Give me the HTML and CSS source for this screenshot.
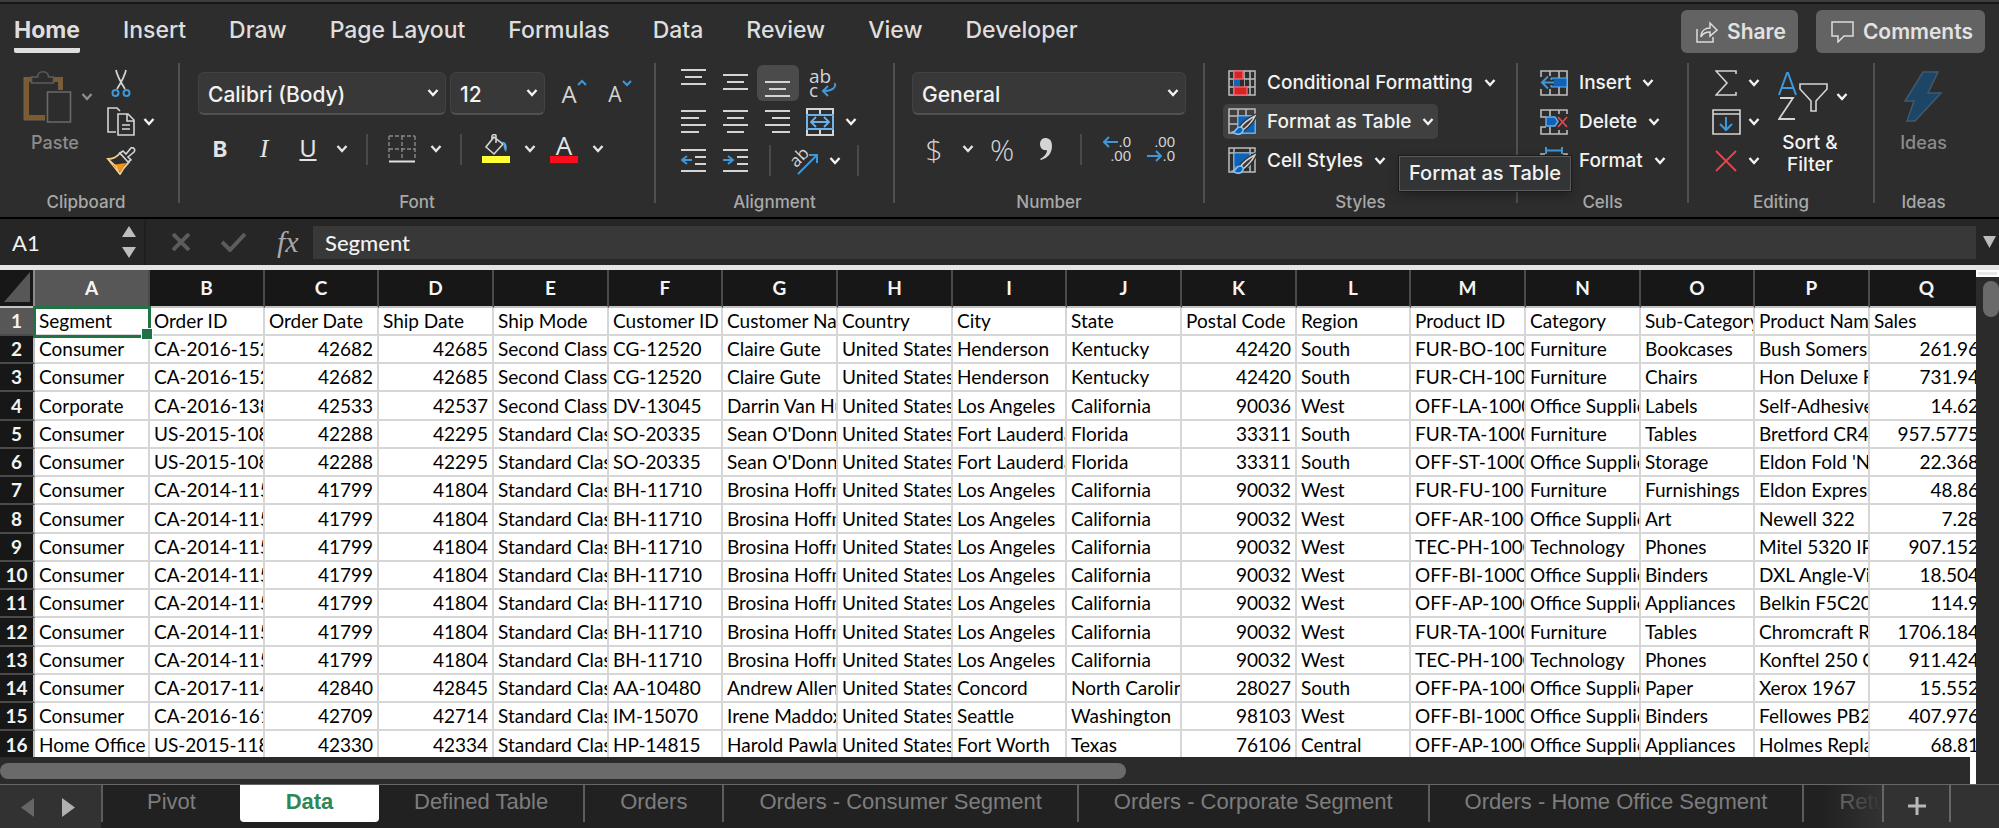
FILE: index.html
```html
<!DOCTYPE html>
<html lang="en">
<head>
    <meta charset="UTF-8">
    <meta name="viewport" content="width=device-width, initial-scale=1.0">
    <title>Orders workbook</title>
    <link rel="stylesheet" href="styles.css">
</head>
<body>

    <!-- Shared icon shapes -->
    <svg class="symbols" aria-hidden="true">
        <symbol id="caret" viewBox="0 0 12 10"><path d="M1.5 2L6 7l4.500-5" fill="none" stroke="currentColor" stroke-width="2.400"/></symbol>
        <symbol id="brush" viewBox="0 0 28 28">
            <path d="M27 8C21 11 15 16 12.500 19.500l2.500 2.500C20 18 25 12.500 27 8z" fill="#2d2d2d" stroke="#2d2d2d" stroke-width="4"/>
            <path d="M27 8C21 11 15 16 12.500 19.500l2.500 2.500C20 18 25 12.500 27 8z" fill="#3a3a3a" stroke="#d0d0d0" stroke-width="1.600"/>
            <path d="M5 24c3 0 3-5 7-5 3 0 4 3 2.500 5-2 3-6 3-9.500 0z" fill="#0f62b5" stroke="#8cc4f0" stroke-width="1.600"/>
        </symbol>
    </svg>

    <!-- Ribbon tabs -->
    <header class="topbar">
        <nav class="ribbon-tabs">
            <a class="active" href="#">Home</a>
            <a href="#">Insert</a>
            <a href="#">Draw</a>
            <a href="#">Page Layout</a>
            <a href="#">Formulas</a>
            <a href="#">Data</a>
            <a href="#">Review</a>
            <a href="#">View</a>
            <a href="#">Developer</a>
        </nav>
        <div class="top-actions">
            <button type="button">
                <svg width="22" height="22" viewBox="0 0 22 22" fill="none" stroke="#dcdcdc" stroke-width="1.500"><path d="M1 8v13h16v-5M5 16c0-6 4-9 9-9V2l7 7-7 6v-4c-4 0-7 1-9 5z"/></svg>
                Share
            </button>
            <button type="button">
                <svg width="23" height="22" viewBox="0 0 23 22" fill="none" stroke="#dcdcdc" stroke-width="1.500"><path d="M1 1h21v14H13l-6 6v-6H1z"/></svg>
                Comments
            </button>
        </div>
    </header>

    <!-- Ribbon -->
    <section class="ribbon">
        <div class="group clipboard">
            <div class="group-body columns">
                <button type="button" class="big dim">
                    <svg width="50" height="54" viewBox="0 0 50 54" fill="none">
                        <path d="M22 47.500H3.500V9.500h34V20" stroke="#7d5a32" stroke-width="5"/>
                        <path d="M1 50h21M1 50V7M38 7v13" stroke="#6f6654" stroke-width="1"/>
                        <path d="M8.500 13V7h6c0-7 11-7 11 0h5v6z" fill="#2d2d2d" stroke="#5c5c5c" stroke-width="1.600"/>
                        <path d="M24.500 22h23v30h-23z" fill="#2d2d2d" stroke="#6a6a6a" stroke-width="1.600"/>
                    </svg>
                    <svg class="caret"><use href="#caret"/></svg>
                    <span>Paste</span>
                </button>
                <div class="rows">
                    <div class="row">
                        <button type="button" class="icon" aria-label="Cut"><svg width="28" height="28" viewBox="0 0 28 28" fill="none"><path d="M9 1c1 5 4 11 9 19M19 1c-1 5-4 11-9 19" stroke="#d4d4d4" stroke-width="1.700"/><circle cx="8.500" cy="24" r="3" stroke="#3f97d8" stroke-width="2"/><circle cx="19.500" cy="24" r="3" stroke="#3f97d8" stroke-width="2"/></svg></button>
                    </div>
                    <div class="row">
                        <button type="button" class="icon" aria-label="Copy"><svg width="30" height="30" viewBox="0 0 30 30" fill="none" stroke="#d4d4d4" stroke-width="1.600"><path d="M10 25H2V1h9l3 3"/><path d="M12 7h10l6 6v15H12zM21 7v7h7M16 18h8M16 22h8"/></svg></button>
                        <button type="button" class="drop" aria-label="Copy options"><svg class="caret"><use href="#caret"/></svg></button>
                    </div>
                    <div class="row">
                        <button type="button" class="icon" aria-label="Format Painter"><svg width="30" height="28" viewBox="0 0 30 28" fill="none"><path d="M2 12c5 0 9-2 12-6l9 9c-4 4-7 8-9 12z" stroke="#f3cf8d" stroke-width="1.800"/><path d="M6 18l14-2-6 9z" fill="#f0921e"/><path d="M2 12l8 7 3 7" stroke="#f3cf8d" stroke-width="1.200"/><path d="M14 6l3-2 3 3 5-6c2-1 5 1 3 4l-6 5 3 3-3 2z" fill="#2d2d2d" stroke="#d4d4d4" stroke-width="1.600"/></svg></button>
                    </div>
                </div>
            </div>
            <h2>Clipboard</h2>
        </div>
        <div class="divider"></div>

        <div class="group font">
            <div class="group-body">
                <div class="fields">
                    <span class="select-box family">
                        <select aria-label="Font"><option>Calibri (Body)</option></select>
                        <svg class="caret"><use href="#caret"/></svg>
                    </span>
                    <span class="select-box size">
                        <select aria-label="Font size"><option>12</option></select>
                        <svg class="caret"><use href="#caret"/></svg>
                    </span>
                    <button type="button" class="grow" aria-label="Increase font size"><span>A</span><svg width="10" height="8" viewBox="0 0 10 8"><path d="M1 6l4-4 4 4" fill="none" stroke="#3f97d8" stroke-width="2"/></svg></button>
                    <button type="button" class="grow shrink" aria-label="Decrease font size"><span>A</span><svg width="10" height="8" viewBox="0 0 10 8"><path d="M1 2l4 4 4-4" fill="none" stroke="#3f97d8" stroke-width="2"/></svg></button>
                </div>
                <div class="tools">
                    <button type="button" class="tool"><b>B</b></button>
                    <button type="button" class="tool"><i>I</i></button>
                    <button type="button" class="tool"><u>U</u></button>
                    <button type="button" class="drop" aria-label="Underline options"><svg class="caret"><use href="#caret"/></svg></button>
                    <span class="rule"></span>
                    <button type="button" class="tool" aria-label="Borders"><svg width="28" height="28" viewBox="0 0 28 28" fill="none"><path d="M1 1h26M1 14h26M1 1v24M14 1v24M27 1v24" stroke="#888" stroke-width="1.400" stroke-dasharray="4 2"/><path d="M1 26.500h26" stroke="#e0e0e0" stroke-width="2"/></svg></button>
                    <button type="button" class="drop" aria-label="Border options"><svg class="caret"><use href="#caret"/></svg></button>
                    <span class="rule"></span>
                    <button type="button" class="tool" aria-label="Fill color"><svg width="30" height="30" viewBox="0 0 30 30" fill="none"><path d="M13 3L5 13l8 7 9-10zM11 6V2c1-2 4-2 4 0v7" stroke="#d4d4d4" stroke-width="1.600"/><path d="M20 8c5-1 7 4 5 10-2-3-3-5-2-8z" fill="#5aa7e0"/><path d="M1 22h28v7H1z" fill="#ffff33"/></svg></button>
                    <button type="button" class="drop" aria-label="Fill options"><svg class="caret"><use href="#caret"/></svg></button>
                    <button type="button" class="tool font-color" aria-label="Font color"><span>A</span></button>
                    <button type="button" class="drop" aria-label="Font color options"><svg class="caret"><use href="#caret"/></svg></button>
                </div>
            </div>
            <h2>Font</h2>
        </div>
        <div class="divider"></div>

        <div class="group alignment">
            <div class="group-body">
                <div class="row">
                    <button type="button" class="align" aria-label="Top align"><svg width="26" height="28" viewBox="0 0 26 28"><path d="M0 1h25M4 8h17M0 15h25"/></svg></button>
                    <button type="button" class="align" aria-label="Middle align"><svg width="26" height="28" viewBox="0 0 26 28"><path d="M0 6h25M4 13h17M0 20h25"/></svg></button>
                    <button type="button" class="align on" aria-label="Bottom align"><svg width="26" height="28" viewBox="0 0 26 28"><path d="M0 13h25M4 20h17M0 27h25"/></svg></button>
                    <button type="button" class="align wrap" aria-label="Wrap text"><span>ab<br>c</span><svg width="15" height="14" viewBox="0 0 15 14"><path d="M14 0c1 5-3 8-12 8M7 3L2 8l5 5" stroke="#3f97d8" stroke-width="2"/></svg></button>
                </div>
                <div class="row">
                    <button type="button" class="align" aria-label="Align left"><svg width="26" height="28" viewBox="0 0 26 28"><path d="M0 3h25M0 10h18M0 17h25M0 24h18"/></svg></button>
                    <button type="button" class="align" aria-label="Center"><svg width="26" height="28" viewBox="0 0 26 28"><path d="M0 3h25M4 10h17M0 17h25M4 24h17"/></svg></button>
                    <button type="button" class="align" aria-label="Align right"><svg width="26" height="28" viewBox="0 0 26 28"><path d="M0 3h25M7 10h18M0 17h25M7 24h18"/></svg></button>
                    <button type="button" class="align" aria-label="Merge and center"><svg width="28" height="28" viewBox="0 0 28 28"><path d="M1 1h26v26H1zM14 1v6M14 21v6"/><path d="M1 7h26v14H1zM5 14h18M10 9l-5 5 5 5M18 9l5 5-5 5" stroke="#6bb0e6" stroke-width="1.800"/></svg></button>
                    <button type="button" class="drop" aria-label="Merge options"><svg class="caret"><use href="#caret"/></svg></button>
                </div>
                <div class="row">
                    <button type="button" class="align" aria-label="Decrease indent"><svg width="26" height="28" viewBox="0 0 26 28"><path d="M0 3h25M14 10h11M14 17h11M0 24h25"/><path d="M11 13H1M6 9l-5 4 5 4" stroke="#3f97d8" stroke-width="2"/></svg></button>
                    <button type="button" class="align" aria-label="Increase indent"><svg width="26" height="28" viewBox="0 0 26 28"><path d="M0 3h25M14 10h11M14 17h11M0 24h25"/><path d="M0 13h10M5 9l5 4-5 4" stroke="#3f97d8" stroke-width="2"/></svg></button>
                    <span class="rule"></span>
                    <button type="button" class="align orient" aria-label="Orientation"><span>ab</span><svg width="22" height="22" viewBox="0 0 22 22"><path d="M1 21L20 2M12 2h8v8" stroke="#3f97d8" stroke-width="2"/></svg></button>
                    <button type="button" class="drop" aria-label="Orientation options"><svg class="caret"><use href="#caret"/></svg></button>
                    <span class="rule"></span>
                </div>
            </div>
            <h2>Alignment</h2>
        </div>
        <div class="divider"></div>

        <div class="group number">
            <div class="group-body">
                <div class="fields">
                    <span class="select-box format">
                        <select aria-label="Number format"><option>General</option></select>
                        <svg class="caret"><use href="#caret"/></svg>
                    </span>
                </div>
                <div class="tools">
                    <button type="button" class="tool sign">$</button>
                    <button type="button" class="drop" aria-label="Currency options"><svg class="caret"><use href="#caret"/></svg></button>
                    <button type="button" class="tool sign">%</button>
                    <button type="button" class="tool" aria-label="Comma style"><svg width="14" height="24" viewBox="0 0 14 24"><path d="M6 1c4 0 7 2 7 8 0 7-4 12-11 14l-1-1c4-2 7-5 7-9-4 1-7-2-7-6 0-3 2-6 5-6z" fill="#d4d4d4"/></svg></button>
                    <span class="rule"></span>
                    <button type="button" class="tool decimals" aria-label="Increase decimal"><span>.0<br>.00</span><svg class="arrow-up" width="15" height="12" viewBox="0 0 15 12"><path d="M15 6H1M6 1L1 6l5 5" fill="none" stroke="#3f97d8" stroke-width="2"/></svg></button>
                    <button type="button" class="tool decimals" aria-label="Decrease decimal"><span>.00<br>.0</span><svg class="arrow-down" width="15" height="12" viewBox="0 0 15 12"><path d="M0 6h14M9 1l5 5-5 5" fill="none" stroke="#3f97d8" stroke-width="2"/></svg></button>
                </div>
            </div>
            <h2>Number</h2>
        </div>
        <div class="divider"></div>

        <div class="group styles">
            <div class="group-body">
                <button type="button" class="command">
                    <svg width="28" height="26" viewBox="0 0 28 26" fill="none"><path d="M1 1h26v24H1zM1 9h26M1 17h26M6 1v24M16 1v24M22 1v24" stroke="#bdbdbd" stroke-width="1.500"/><path d="M6 9h10v8H6z" fill="#2d2d2d"/><path d="M6 9h6v8H6z" fill="#1266b8"/><path d="M6 1h9v8H6zM6 17h13v8H6z" fill="#d62424" stroke="#f0606a" stroke-width="1.400"/></svg>
                    Conditional Formatting
                    <svg class="caret"><use href="#caret"/></svg>
                </button>
                <div class="command-slot">
                    <button type="button" class="command on">
                        <svg width="28" height="27" viewBox="0 0 28 27" fill="none"><path d="M1 1h26v24H1zM1 8h26M1 16h10M10 1v24M18 1v8" stroke="#bdbdbd" stroke-width="1.500"/><path d="M10 8h17v17H10z" fill="#0f62b5" stroke="#6bb0e6"/><use href="#brush" width="28" height="28"/></svg>
                        Format as Table
                        <svg class="caret"><use href="#caret"/></svg>
                    </button>
                    <div class="tooltip" role="tooltip">Format as Table</div>
                </div>
                <button type="button" class="command">
                    <svg width="28" height="27" viewBox="0 0 28 27" fill="none"><path d="M1 1h26v24H1zM1 6h26M6 1v24M22 1v24" stroke="#bdbdbd" stroke-width="1.500"/><path d="M6 6h16v14H6z" fill="#0f62b5" stroke="#6bb0e6"/><use href="#brush" width="28" height="28"/></svg>
                    Cell Styles
                    <svg class="caret"><use href="#caret"/></svg>
                </button>
            </div>
            <h2>Styles</h2>
        </div>
        <div class="divider"></div>

        <div class="group cells">
            <div class="group-body">
                <button type="button" class="command">
                    <svg width="28" height="26" viewBox="0 0 28 26" fill="none"><path d="M1 7V1h26v24H1v-6M10 1v5M19 1v24M10 19v6" stroke="#bdbdbd" stroke-width="1.600"/><path d="M11 8h16v9H11z" fill="#0f62b5" stroke="#6bb0e6"/><path d="M14 12.500H2M8 6l-6 6.500L8 19" stroke="#2d2d2d" stroke-width="5"/><path d="M14 12.500H2M8 6.500L2 12.500l6 6" stroke="#3f97d8" stroke-width="2"/></svg>
                    Insert
                    <svg class="caret"><use href="#caret"/></svg>
                </button>
                <button type="button" class="command">
                    <svg width="28" height="26" viewBox="0 0 28 26" fill="none"><path d="M27 5V1H1v7h5M27 21v4H1v-7h5M10 1v6M19 1v4M10 18v7M19 21v4" stroke="#bdbdbd" stroke-width="1.600"/><path d="M6 8h9l3 4.500-3 4.500H6z" fill="#0f62b5" stroke="#6bb0e6" stroke-width="1.400"/><path d="M18 8l9 10M27 8l-9 10" stroke="#e2474d" stroke-width="1.800"/></svg>
                    Delete
                    <svg class="caret"><use href="#caret"/></svg>
                </button>
                <button type="button" class="command">
                    <svg width="28" height="28" viewBox="0 0 28 28" fill="none"><path d="M5 7H1v19h26V7h-4M9 9v17M19 9v17" stroke="#bdbdbd" stroke-width="1.600"/><path d="M6 3.500h16M6 0v7M22 0v7" stroke="#3f97d8" stroke-width="2"/></svg>
                    Format
                    <svg class="caret"><use href="#caret"/></svg>
                </button>
            </div>
            <h2>Cells</h2>
        </div>
        <div class="divider"></div>

        <div class="group editing">
            <div class="group-body columns">
                <div class="rows">
                    <div class="row">
                        <button type="button" class="icon" aria-label="AutoSum"><svg width="22" height="26" viewBox="0 0 22 26" fill="none"><path d="M21 4V1H1l11 12L1 25h20v-3" stroke="#d4d4d4" stroke-width="1.600"/></svg></button>
                        <button type="button" class="drop" aria-label="AutoSum options"><svg class="caret"><use href="#caret"/></svg></button>
                    </div>
                    <div class="row">
                        <button type="button" class="icon" aria-label="Fill"><svg width="29" height="26" viewBox="0 0 29 26" fill="none"><path d="M1 1h27v24H1zM1 5h27" stroke="#d4d4d4" stroke-width="1.600"/><path d="M14 8v13M8 15l6 6 6-6" stroke="#3f97d8" stroke-width="2"/></svg></button>
                        <button type="button" class="drop" aria-label="Fill options"><svg class="caret"><use href="#caret"/></svg></button>
                    </div>
                    <div class="row">
                        <button type="button" class="icon" aria-label="Clear"><svg width="22" height="22" viewBox="0 0 22 22"><path d="M1 1l20 20M21 1L1 21" stroke="#e2474d" stroke-width="1.800"/></svg></button>
                        <button type="button" class="drop" aria-label="Clear options"><svg class="caret"><use href="#caret"/></svg></button>
                    </div>
                </div>
                <button type="button" class="big">
                    <svg width="50" height="54" viewBox="0 0 50 54" fill="none"><path d="M1 25L9 3h1l8 22M4 18h11" stroke="#3f97d8" stroke-width="2"/><path d="M2 28h13L1 49h16" stroke="#d4d4d4" stroke-width="1.800"/><path d="M22 14h27v5L38 31v10h-5V31L22 19z" stroke="#d4d4d4" stroke-width="1.600"/></svg>
                    <svg class="caret"><use href="#caret"/></svg>
                    <span>Sort &amp;<br>Filter</span>
                </button>
            </div>
            <h2>Editing</h2>
        </div>
        <div class="divider"></div>

        <div class="group ideas">
            <div class="group-body columns">
                <button type="button" class="big dim">
                    <svg width="40" height="54" viewBox="0 0 40 54"><path d="M20 2h15L25 23h13L12 51H4l7-20H2z" fill="#1d4565" stroke="#3f5a6e" stroke-width="1.500"/></svg>
                    <span>Ideas</span>
                </button>
            </div>
            <h2>Ideas</h2>
        </div>
    </section>

    <!-- Formula bar -->
    <section class="formula-bar">
        <input class="name-box" type="text" value="A1" aria-label="Name box">
        <div class="stepper">
            <button type="button" aria-label="Previous name"><svg width="14" height="11" viewBox="0 0 14 11"><path d="M7 0l7 11H0z"/></svg></button>
            <button type="button" aria-label="Next name"><svg width="14" height="11" viewBox="0 0 14 11"><path d="M7 11l7-11H0z"/></svg></button>
        </div>
        <div class="formula-actions">
            <button type="button" aria-label="Cancel"><svg width="18" height="18" viewBox="0 0 18 18"><path d="M1 1l16 16M17 1L1 17" stroke="#5c5c5c" stroke-width="4"/></svg></button>
            <button type="button" aria-label="Enter"><svg width="25" height="19" viewBox="0 0 25 19"><path d="M1 9l8 8L24 1" fill="none" stroke="#5c5c5c" stroke-width="4"/></svg></button>
            <button type="button" class="fx" aria-label="Insert function">fx</button>
        </div>
        <input class="formula" type="text" value="Segment" aria-label="Formula">
        <button type="button" class="expand" aria-label="Expand formula bar"><svg width="13" height="12" viewBox="0 0 13 12"><path d="M6.500 12L13 0H0z"/></svg></button>
    </section>

    <!-- Worksheet -->
    <main class="sheet">
        <div class="viewport">
            <table id="grid">
                <thead><tr></tr></thead>
                <tbody></tbody>
            </table>
            <div class="selection"></div>
        </div>
        <div class="scroll-y"><div class="split"></div><div class="thumb"></div></div>
    </main>
    <div class="scroll-x"><div class="thumb"></div><div class="split"></div></div>

    <!-- Sheet tabs -->
    <footer class="sheet-bar">
        <div class="sheet-nav">
            <button type="button" class="prev" aria-label="Previous sheet"><svg width="13" height="19" viewBox="0 0 13 19"><path d="M13 0v19L0 9.500z"/></svg></button>
            <button type="button" aria-label="Next sheet"><svg width="13" height="19" viewBox="0 0 13 19"><path d="M0 0v19l13-9.500z"/></svg></button>
        </div>
        <div class="sheet-tabs">
            <button type="button">Pivot</button>
            <button type="button" class="active">Data</button>
            <button type="button">Defined Table</button>
            <button type="button">Orders</button>
            <button type="button">Orders - Consumer Segment</button>
            <button type="button">Orders - Corporate Segment</button>
            <button type="button">Orders - Home Office Segment</button>
            <button type="button">Returns</button>
        </div>
        <button type="button" class="add-sheet" aria-label="Add sheet"><svg width="18" height="18" viewBox="0 0 18 18"><path d="M9 0v18M0 9h18" stroke="#b8b8b8" stroke-width="3"/></svg></button>
        <div class="sheet-end"></div>
    </footer>

    <script src="script.js"></script>
</body>
</html>
```
FILE: styles.css
```css
/* Basic Reset */
* {
    margin: 0;
    padding: 0;
    box-sizing: border-box;
}

body {
    font-family: 'Inter', 'Roboto', sans-serif;
    font-size: 18px;
    color: #f2f2f2;
    background: #2d2d2d;
    height: 100vh;
    display: flex;
    flex-direction: column;
    overflow: hidden;
}

button, input, select {
    font: inherit;
    color: inherit;
    background: none;
    border: none;
    outline: none;
}

button {
    display: flex;
    align-items: center;
    justify-content: center;
    flex: none;
    white-space: nowrap;
}

svg {
    display: block;
    flex: none;
}

.symbols {
    position: absolute;
    width: 0;
    height: 0;
}

.caret {
    width: 12px;
    height: 10px;
}

/* Ribbon tabs */
.topbar {
    display: flex;
    justify-content: space-between;
    align-items: flex-start;
    height: 63px;
    flex: none;
    padding: 8px 14px 0;
    border-top: 2px solid #3c3c3c;
    box-shadow: inset 0 2px #171717;
}

.ribbon-tabs {
    display: flex;
    gap: 43px;
    font-size: 23px;
    font-weight: 500;
    line-height: 41px;
}

.ribbon-tabs a {
    color: #dedede;
    text-decoration: none;
    height: 43px;
}

.ribbon-tabs .active {
    font-weight: 700;
    border-bottom: 5px solid #dedede;
    border-radius: 2px;
}

.top-actions {
    display: flex;
    gap: 18px;
}

.top-actions button {
    height: 43px;
    padding: 0 12px 0 15px;
    gap: 9px;
    font-size: 21px;
    font-weight: 600;
    color: #e2e2e2;
    background: #636363;
    border-radius: 6px;
}

/* Ribbon */
.ribbon {
    display: flex;
    align-items: flex-start;
    flex: none;
    height: 156px;
    border-bottom: 2px solid #000;
}

.divider {
    width: 2px;
    height: 140px;
    background: #505050;
    flex: none;
}

.group {
    flex: none;
}

.group h2 {
    font-size: 17px;
    font-weight: 500;
    line-height: 22px;
    color: #a8a8a8;
    text-align: center;
}

.group-body {
    height: 128px;
}

.clipboard { width: 178px; }
.font { width: 474px; }
.alignment { width: 237px; }
.number { width: 308px; }
.styles { width: 311px; }
.cells { width: 169px; }
.editing { width: 184px; }
.ideas { width: 97px; }

.clipboard h2 { padding-right: 6px; }
.clipboard .group-body { padding-left: 23px; }
.font .group-body { padding: 9px 0 0 18px; }
.alignment .group-body { padding-left: 17px; }
.number .group-body { padding: 9px 0 0 17px; }
.styles .group-body { padding-left: 18px; }
.cells .group-body { padding-left: 17px; }
.editing .group-body { padding-left: 19px; }
.ideas .group-body { justify-content: center; }

.columns {
    display: flex;
    align-items: flex-start;
    gap: 10px;
}

.row {
    display: flex;
    align-items: center;
    height: 39px;
}

.icon {
    width: 36px;
    height: 35px;
}

.drop {
    width: 20px;
    height: 28px;
}

.fields {
    display: flex;
    align-items: center;
    height: 43px;
    gap: 4px;
}

.tools {
    display: flex;
    align-items: center;
    height: 30px;
    margin-top: 19px;
    color: #d4d4d4;
}

.tool {
    width: 44px;
    height: 30px;
    font-size: 23px;
}

.font .tool,
.font .drop,
.number .drop {
    color: #e4e4e4;
}

.tools .drop {
    width: 24px;
}

.rule {
    width: 2px;
    height: 31px;
    margin: 0 12px;
    background: #4a4a4a;
    flex: none;
}

/* Drop-down boxes */
.select-box {
    display: grid;
    align-items: center;
    height: 43px;
    background: #383838;
    border: 1px solid #424242;
    border-bottom: 2px solid #505050;
    border-radius: 6px;
}

.select-box > * {
    grid-area: 1 / 1;
}

.select-box select {
    appearance: none;
    width: 100%;
    height: 40px;
    padding: 3px 0 0 9px;
    font-size: 21px;
    font-weight: 500;
}

.select-box .caret {
    justify-self: end;
    margin-right: 6px;
    pointer-events: none;
}

.family { width: 248px; }
.size { width: 95px; }
.format { width: 274px; }

.grow {
    align-items: flex-start;
    width: 42px;
    height: 30px;
    font-family: 'Open Sans', sans-serif;
    font-size: 24px;
    line-height: 30px;
    color: #d4d4d4;
}

.size + .grow {
    margin-left: 4px;
}

.shrink {
    font-size: 21px;
}

.tool b {
    font-size: 22px;
}

.tool i {
    font-family: 'Liberation Serif', serif;
    font-size: 26px;
}

.font-color {
    align-items: flex-start;
}

.font-color span {
    width: 28px;
    height: 29px;
    line-height: 22px;
    font-family: 'Open Sans', sans-serif;
    font-size: 26px;
    border-bottom: 7px solid #fb0d1b;
}

/* Alignment */
.align {
    position: relative;
    width: 42px;
    height: 36px;
    color: #d4d4d4;
}

.align svg {
    fill: none;
    stroke: #d4d4d4;
    stroke-width: 2;
}

.align.on {
    background: #4b4b4b;
    border-radius: 6px;
}

.wrap {
    font-family: 'Open Sans', sans-serif;
    font-size: 19px;
    line-height: 14px;
    text-align: left;
}

.wrap svg {
    position: absolute;
    right: 5px;
    bottom: 4px;
}

.orient span {
    font-family: 'Open Sans', sans-serif;
    font-size: 17px;
    line-height: 18px;
    rotate: -45deg;
    margin: 0 10px 8px 0;
}

.orient svg {
    position: absolute;
    right: 6px;
    bottom: 4px;
}

/* Number */
.sign {
    font-family: 'Open Sans', sans-serif;
    font-weight: 300;
    font-size: 30px;
}

.decimals {
    position: relative;
    justify-content: flex-end;
    padding-right: 7px;
    font-family: 'Liberation Sans', sans-serif;
    font-size: 15px;
    line-height: 14px;
    text-align: right;
}

.decimals svg {
    position: absolute;
    left: 9px;
}

.arrow-up { top: 2px; }
.arrow-down { bottom: 2px; }

/* Styles and cells */
.styles .group-body,
.cells .group-body {
    display: flex;
    flex-direction: column;
    align-items: flex-start;
    gap: 4px;
    padding-top: 2px;
}

.command {
    height: 35px;
    padding: 0 4px 0 5px;
    gap: 11px;
    font-size: 19px;
    font-weight: 500;
    border-radius: 5px;
}

.command.on {
    background: #404040;
}

.command-slot {
    position: relative;
}

.tooltip {
    position: absolute;
    left: 176px;
    top: 52px;
    z-index: 1;
    padding: 0 9px;
    font-size: 20px;
    font-weight: 500;
    line-height: 33px;
    white-space: nowrap;
    background: #323436;
    border: 1px solid #5a5a5a;
    box-shadow: 0 0 0 1px #1b1b1b, 0 4px 10px rgba(0, 0, 0, 0.3);
}

/* Large buttons */
.big {
    display: grid;
    grid-template-columns: auto auto;
    gap: 8px;
    margin-top: 7px;
    font-weight: 500;
    line-height: 22px;
}

.big span {
    grid-column: 1 / -1;
    padding-right: 6px;
}

.big.dim {
    color: #8c8c8c;
}

.editing .big {
    margin-left: 4px;
    font-size: 19px;
}

.ideas .big {
    grid-template-columns: auto;
}

.ideas .big svg {
    justify-self: center;
}

.ideas .big span {
    padding-right: 0;
}

/* Formula bar */
.formula-bar {
    display: flex;
    align-items: center;
    flex: none;
    height: 51px;
    background: #262626;
    border-bottom: 5px solid #e4e4e4;
}

.name-box {
    width: 120px;
    height: 45px;
    padding-left: 12px;
    font-family: 'Lato', sans-serif;
    font-size: 22px;
}

.stepper {
    display: flex;
    flex-direction: column;
    gap: 10px;
    width: 24px;
    padding-left: 2px;
}

.stepper button {
    width: 14px;
}

.stepper svg,
.expand svg {
    fill: #bdbdbd;
}

.formula-actions {
    display: flex;
    align-items: center;
    width: 169px;
    height: 45px;
    padding-left: 26px;
    gap: 31px;
    border-left: 2px solid #1f1f1f;
}

.fx {
    font-family: 'Liberation Serif', serif;
    font-style: italic;
    font-size: 30px;
    color: #a8a8a8;
    line-height: 30px;
}

.formula {
    flex: 1;
    height: 33px;
    padding-left: 12px;
    font-family: 'Lato', sans-serif;
    font-size: 22px;
    font-weight: 500;
    background: #383838;
}

.expand {
    width: 23px;
    padding-left: 4px;
}

/* Worksheet */
.sheet {
    display: flex;
    flex: 1;
    min-height: 0;
}

.viewport {
    position: relative;
    flex: 1;
    min-width: 0;
    overflow: hidden;
    background: #fff;
}

table {
    table-layout: fixed;
    width: 0;
    border-spacing: 0;
    font-family: 'Lato', sans-serif;
    font-size: 19px;
    line-height: 26px;
    color: #000;
}

th, td {
    overflow: hidden;
    white-space: nowrap;
}

thead th {
    width: 115px;
    height: 38px;
    color: #f4f4f4;
    background: #171717;
    border-right: 2px solid #4a4a4a;
    border-bottom: 2px solid #c4c4c4;
}

/* Column pitch averages a little under 115px */
thead th:nth-child(3n + 4) {
    width: 114px;
}

thead .corner {
    width: 35px;
    padding: 0 4px 2px;
    border-right-color: #8a8a8a;
}

thead .current,
tbody .current {
    background: #575757;
}

tbody th {
    color: #f4f4f4;
    background: #171717;
    border-right: 2px solid #bdbdbd;
    border-bottom: 2px solid #4a4a4a;
    text-align: center;
}

td {
    height: 28px;
    padding: 0 4px;
    border-right: 2px solid #d6d6d6;
    border-bottom: 2px solid #d6d6d6;
}

tbody tr:nth-child(4n) td {
    height: 29px;
}

.num {
    text-align: right;
}

.selection {
    position: absolute;
    left: 33px;
    top: 36px;
    width: 118px;
    height: 32px;
    border: 3px solid #217346;
}

.selection::after {
    content: "";
    position: absolute;
    right: -5px;
    bottom: -5px;
    width: 10px;
    height: 10px;
    background: #217346;
    border: 1px solid #fff;
}

/* Scroll bars */
.scroll-y {
    width: 23px;
    background: #2b2b2b;
}

.scroll-y .split {
    height: 7px;
    background: #e8e8e8;
    border: 2px solid #fff;
}

.scroll-y .thumb {
    width: 16px;
    height: 36px;
    margin: 4px 0 0 7px;
    background: #6a6a6a;
    border-radius: 8px;
}

.scroll-x {
    display: flex;
    align-items: center;
    justify-content: space-between;
    flex: none;
    height: 27px;
    padding-right: 23px;
    background: #2b2b2b;
}

.scroll-x .thumb {
    width: 57%;
    height: 16px;
    background: #6a6a6a;
    border-radius: 8px;
}

.scroll-x .split {
    width: 6px;
    height: 27px;
    background: #fff;
}

/* Sheet tabs */
.sheet-bar {
    display: flex;
    flex: none;
    height: 44px;
    background: #323232;
    border-top: 1px solid #666;
}

.sheet-nav {
    display: flex;
    gap: 28px;
    width: 101px;
    padding: 2px 0 0 21px;
    flex: none;
}

.sheet-nav svg {
    fill: #b0b0b0;
}

.sheet-nav .prev svg {
    fill: #666;
}

.sheet-tabs {
    position: relative;
    display: flex;
    align-items: flex-start;
    flex: 1;
    min-width: 0;
    overflow: hidden;
    background: #212121;
}

.sheet-tabs button {
    height: 37px;
    min-width: 139px;
    padding: 0 35px 4px;
    font-family: 'Liberation Sans', sans-serif;
    font-size: 22px;
    color: #7d7d7d;
    border-left: 2px solid #5c5c5c;
}

.sheet-tabs .active {
    color: #2f8757;
    font-weight: 700;
    background: #fff;
    border-left: none;
    border-radius: 0 0 4px 4px;
}

.sheet-tabs .active + button {
    border-left: none;
}

/* Fade over the last visible tab */
.sheet-tabs::after {
    content: "";
    position: absolute;
    right: 0;
    top: 0;
    width: 60px;
    height: 100%;
    background: linear-gradient(to right, transparent, #323232);
}

.add-sheet {
    width: 69px;
    height: 37px;
    padding-top: 4px;
    border-left: 2px solid #666;
    border-right: 2px solid #666;
}

.sheet-end {
    width: 48px;
    flex: none;
}
```
FILE: script.js
```javascript
const columns = 'ABCDEFGHIJKLMNOPQ'.split('');
const numeric = [2, 3, 10, 16];

const rows = [
    ['Segment', 'Order ID', 'Order Date', 'Ship Date', 'Ship Mode', 'Customer ID', 'Customer Name', 'Country', 'City', 'State', 'Postal Code', 'Region', 'Product ID', 'Category', 'Sub-Category', 'Product Name', 'Sales'],
    ['Consumer', 'CA-2016-152156', 42682, 42685, 'Second Class', 'CG-12520', 'Claire Gute', 'United States', 'Henderson', 'Kentucky', 42420, 'South', 'FUR-BO-10001798', 'Furniture', 'Bookcases', 'Bush Somerset', 261.96],
    ['Consumer', 'CA-2016-152156', 42682, 42685, 'Second Class', 'CG-12520', 'Claire Gute', 'United States', 'Henderson', 'Kentucky', 42420, 'South', 'FUR-CH-10000454', 'Furniture', 'Chairs', 'Hon Deluxe Fabric', 731.94],
    ['Corporate', 'CA-2016-138688', 42533, 42537, 'Second Class', 'DV-13045', 'Darrin Van Huff', 'United States', 'Los Angeles', 'California', 90036, 'West', 'OFF-LA-10000240', 'Office Supplies', 'Labels', 'Self-Adhesive', 14.62],
    ['Consumer', 'US-2015-108966', 42288, 42295, 'Standard Class', 'SO-20335', "Sean O'Donnell", 'United States', 'Fort Lauderdale', 'Florida', 33311, 'South', 'FUR-TA-10000577', 'Furniture', 'Tables', 'Bretford CR4500', 957.5775],
    ['Consumer', 'US-2015-108966', 42288, 42295, 'Standard Class', 'SO-20335', "Sean O'Donnell", 'United States', 'Fort Lauderdale', 'Florida', 33311, 'South', 'OFF-ST-10000760', 'Office Supplies', 'Storage', "Eldon Fold 'N Roll", 22.368],
    ['Consumer', 'CA-2014-115812', 41799, 41804, 'Standard Class', 'BH-11710', 'Brosina Hoffman', 'United States', 'Los Angeles', 'California', 90032, 'West', 'FUR-FU-10001487', 'Furniture', 'Furnishings', 'Eldon Expressions', 48.86],
    ['Consumer', 'CA-2014-115812', 41799, 41804, 'Standard Class', 'BH-11710', 'Brosina Hoffman', 'United States', 'Los Angeles', 'California', 90032, 'West', 'OFF-AR-10002833', 'Office Supplies', 'Art', 'Newell 322', 7.28],
    ['Consumer', 'CA-2014-115812', 41799, 41804, 'Standard Class', 'BH-11710', 'Brosina Hoffman', 'United States', 'Los Angeles', 'California', 90032, 'West', 'TEC-PH-10002275', 'Technology', 'Phones', 'Mitel 5320 IP Phone', 907.152],
    ['Consumer', 'CA-2014-115812', 41799, 41804, 'Standard Class', 'BH-11710', 'Brosina Hoffman', 'United States', 'Los Angeles', 'California', 90032, 'West', 'OFF-BI-10003910', 'Office Supplies', 'Binders', 'DXL Angle-View', 18.504],
    ['Consumer', 'CA-2014-115812', 41799, 41804, 'Standard Class', 'BH-11710', 'Brosina Hoffman', 'United States', 'Los Angeles', 'California', 90032, 'West', 'OFF-AP-10002892', 'Office Supplies', 'Appliances', 'Belkin F5C206VTEL', 114.9],
    ['Consumer', 'CA-2014-115812', 41799, 41804, 'Standard Class', 'BH-11710', 'Brosina Hoffman', 'United States', 'Los Angeles', 'California', 90032, 'West', 'FUR-TA-10001539', 'Furniture', 'Tables', 'Chromcraft Rectangular', 1706.184],
    ['Consumer', 'CA-2014-115812', 41799, 41804, 'Standard Class', 'BH-11710', 'Brosina Hoffman', 'United States', 'Los Angeles', 'California', 90032, 'West', 'TEC-PH-10002033', 'Technology', 'Phones', 'Konftel 250 Conference', 911.424],
    ['Consumer', 'CA-2017-114412', 42840, 42845, 'Standard Class', 'AA-10480', 'Andrew Allen', 'United States', 'Concord', 'North Carolina', 28027, 'South', 'OFF-PA-10002365', 'Office Supplies', 'Paper', 'Xerox 1967', 15.552],
    ['Consumer', 'CA-2016-161389', 42709, 42714, 'Standard Class', 'IM-15070', 'Irene Maddox', 'United States', 'Seattle', 'Washington', 98103, 'West', 'OFF-BI-10003656', 'Office Supplies', 'Binders', 'Fellowes PB200', 407.976],
    ['Home Office', 'US-2015-118983', 42330, 42334, 'Standard Class', 'HP-14815', 'Harold Pawlan', 'United States', 'Fort Worth', 'Texas', 76106, 'Central', 'OFF-AP-10002311', 'Office Supplies', 'Appliances', 'Holmes Replacement', 68.81]
];

const corner = '<th class="corner"><svg width="26" height="30" viewBox="0 0 26 30"><path d="M26 0v30H0z" fill="#575757"/></svg></th>';

document.querySelector('#grid thead tr').innerHTML = corner + columns
    .map((name, i) => `<th class="${i === 0 ? 'current' : ''}">${name}</th>`)
    .join('');

document.querySelector('#grid tbody').innerHTML = rows
    .map((cells, r) => {
        const tds = cells
            .map((value, c) => `<td class="${r > 0 && numeric.includes(c) ? 'num' : ''}">${value}</td>`)
            .join('');
        return `<tr><th class="${r === 0 ? 'current' : ''}">${r + 1}</th>${tds}</tr>`;
    })
    .join('');
```
